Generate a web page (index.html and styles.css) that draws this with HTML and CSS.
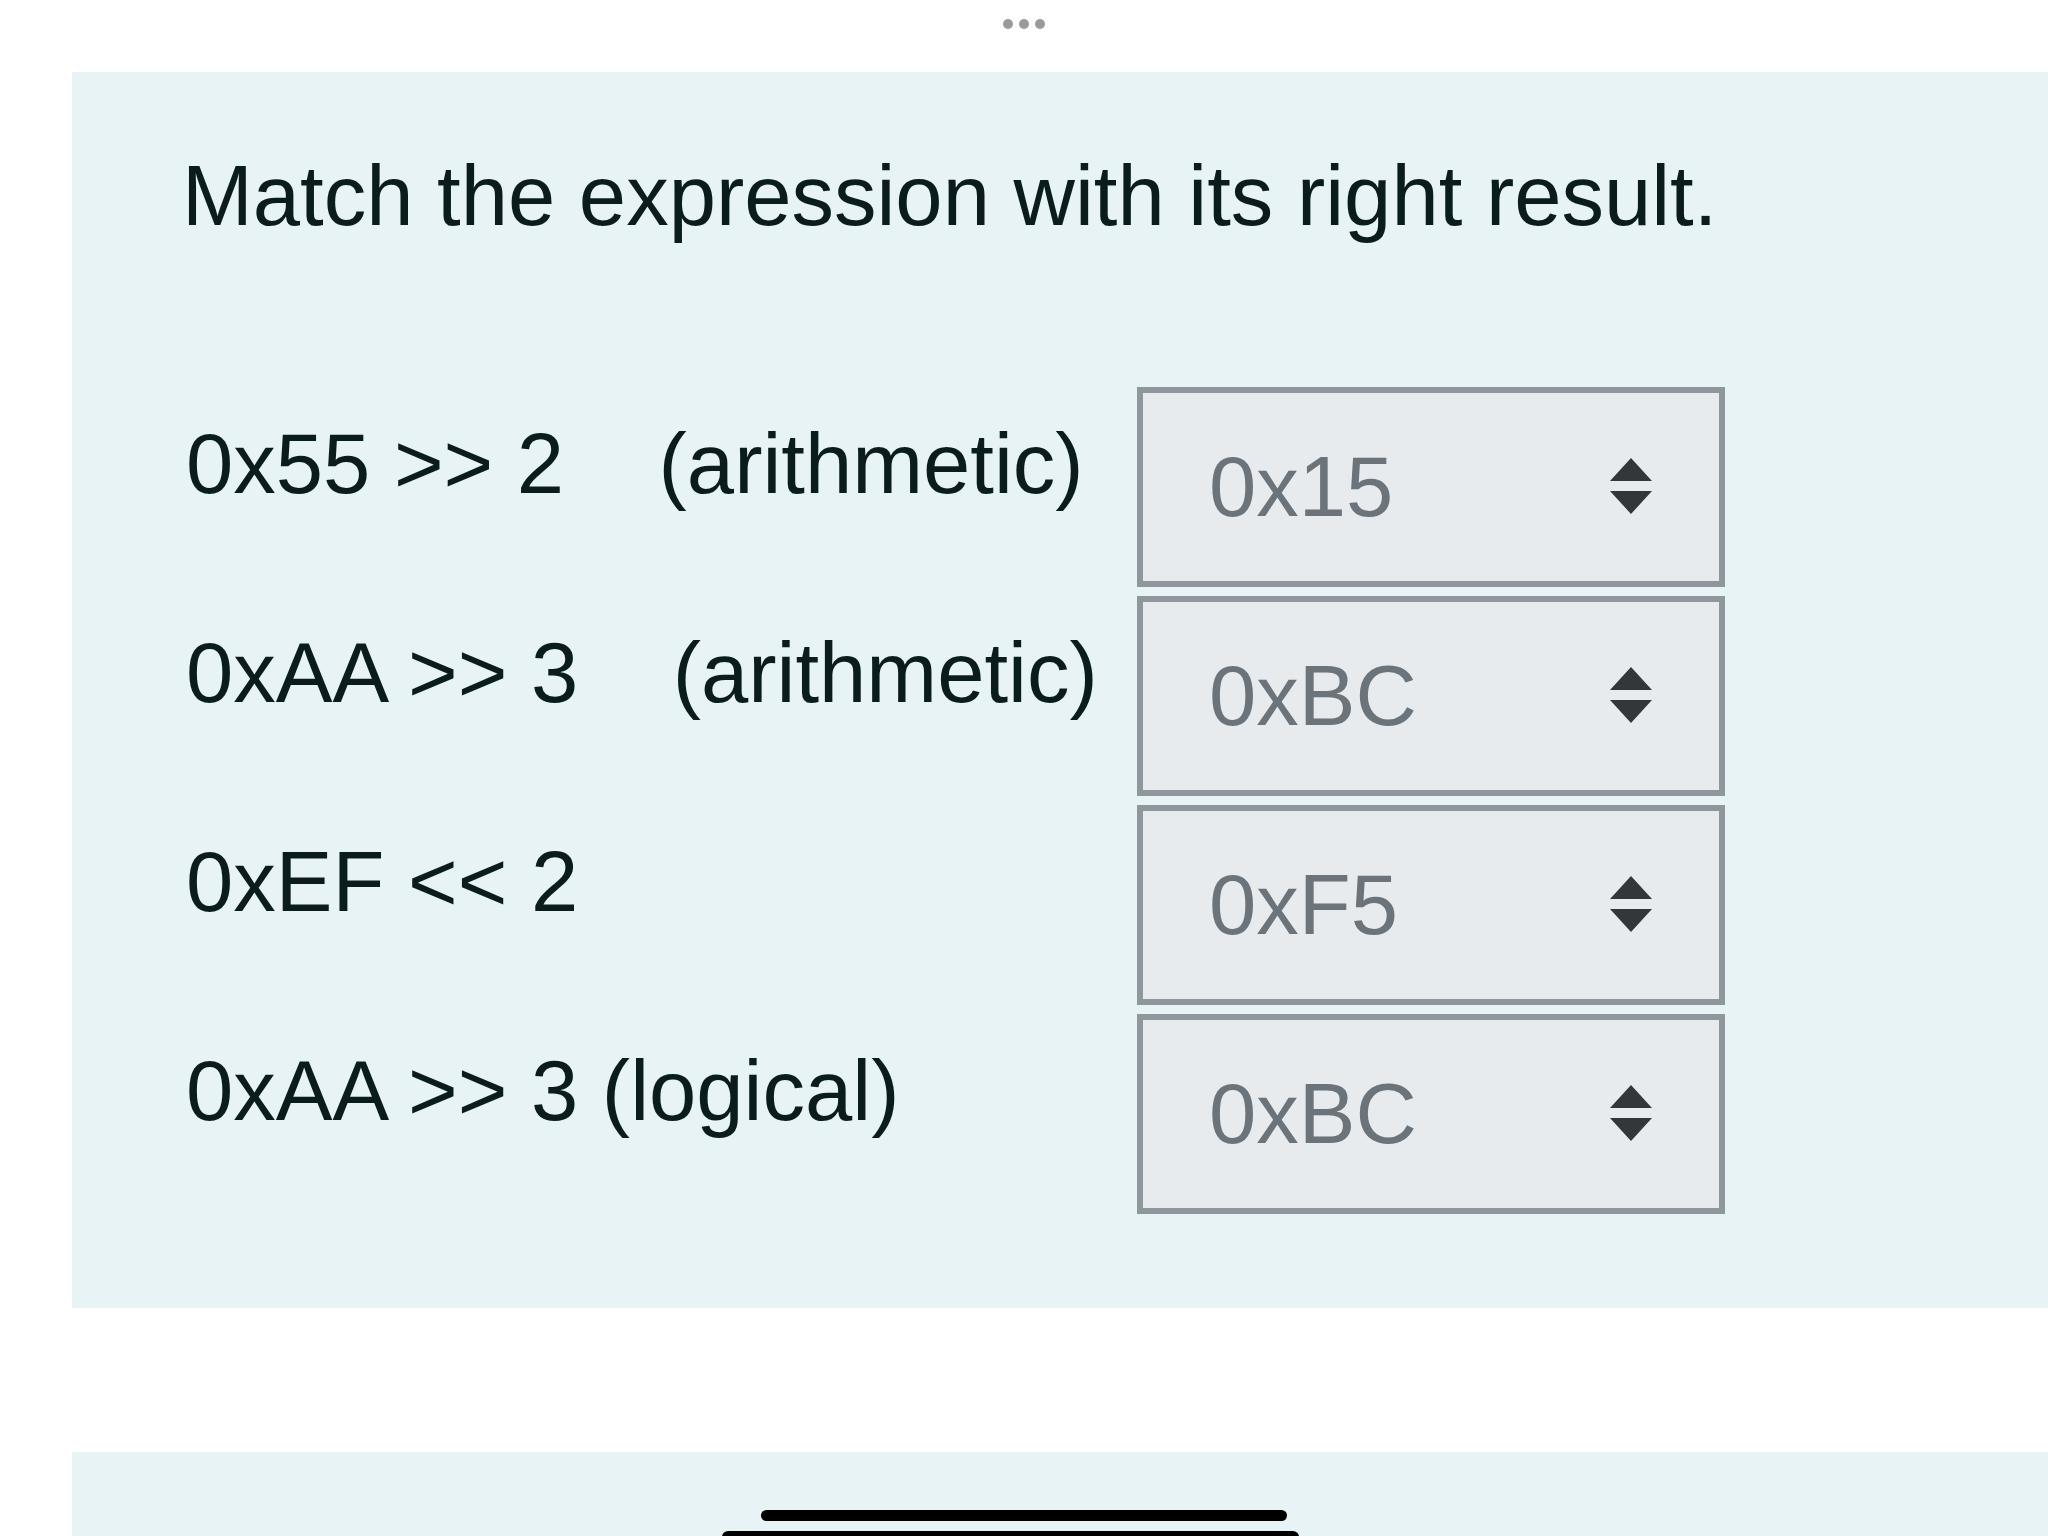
FILE: index.html
```html
<!DOCTYPE html>
<html lang="en">
<head>
  <meta charset="UTF-8">
  <title>Match the expression</title>
  <meta name="viewport" content="width=device-width, initial-scale=1.0">
  <link rel="stylesheet" href="styles.css">
</head>
<body>

  <div class="top-dots">
    <span></span><span></span><span></span>
  </div>

  <div class="question">
    <h1 class="qtext">Match the expression with its right result.</h1>

    <div class="matches">
      <div class="match-row">
        <div class="expr">0x55 &gt;&gt; 2&nbsp;&nbsp;&nbsp;&nbsp;(arithmetic)</div>
        <div class="select">
          <span class="value">0x15</span>
          <svg class="arrows" width="44" height="56" viewBox="0 0 44 56"><path d="M22 0 L43 23 L1 23 Z M1 33 L43 33 L22 56 Z" fill="#33373b"/></svg>
        </div>
      </div>
      <div class="match-row">
        <div class="expr">0xAA &gt;&gt; 3&nbsp;&nbsp;&nbsp;&nbsp;(arithmetic)</div>
        <div class="select">
          <span class="value">0xBC</span>
          <svg class="arrows" width="44" height="56" viewBox="0 0 44 56"><path d="M22 0 L43 23 L1 23 Z M1 33 L43 33 L22 56 Z" fill="#33373b"/></svg>
        </div>
      </div>
      <div class="match-row">
        <div class="expr">0xEF &lt;&lt; 2</div>
        <div class="select">
          <span class="value">0xF5</span>
          <svg class="arrows" width="44" height="56" viewBox="0 0 44 56"><path d="M22 0 L43 23 L1 23 Z M1 33 L43 33 L22 56 Z" fill="#33373b"/></svg>
        </div>
      </div>
      <div class="match-row">
        <div class="expr">0xAA &gt;&gt; 3 (logical)</div>
        <div class="select">
          <span class="value">0xBC</span>
          <svg class="arrows" width="44" height="56" viewBox="0 0 44 56"><path d="M22 0 L43 23 L1 23 Z M1 33 L43 33 L22 56 Z" fill="#33373b"/></svg>
        </div>
      </div>
    </div>
  </div>

  <div class="question next"></div>

  <div class="home-bar"></div>
  <div class="toolbar-edge"></div>

</body>
</html>
```

FILE: styles.css
```css
html, body {
  margin: 0;
  height: 1536px;
  overflow: hidden;
}
body {
  background-color: #fff;
  font-family: "Liberation Sans", Arial, sans-serif;
  color: #0b1c1f;
  position: relative;
}
.top-dots {
  height: 72px;
  display: flex;
  justify-content: center;
  align-items: flex-start;
  gap: 6px;
  box-sizing: border-box;
  padding-top: 19px;
}
.top-dots span {
  width: 10px;
  height: 10px;
  border-radius: 50%;
  background-color: #9a9a9a;
}
.question {
  margin-left: 72px;
  background-color: #e7f3f5;
  padding: 73px 0 94px 110px;
}
.question.next {
  margin-top: 144px;
  height: 120px;
  padding: 0;
}
.qtext {
  margin: 0 0 140px 0;
  font-size: 85px;
  font-weight: normal;
  line-height: 102px;
}
.matches {
  display: flex;
  flex-direction: column;
  gap: 9px;
}
.match-row {
  display: flex;
  align-items: flex-start;
}
.expr {
  width: 951px;
  padding: 26px 0 0 4px;
  font-size: 85px;
  line-height: 102px;
  white-space: nowrap;
}
.select {
  width: 444px;
  height: 188px;
  border: 6px solid #8f969e;
  background-color: #e7ebee;
  display: flex;
  align-items: center;
  justify-content: space-between;
  padding: 0 66px 0 66px;
}
.select .value {
  font-size: 85px;
  line-height: 102px;
  color: #6b737b;
}
.arrows {
  display: block;
  margin-top: -2px;
}
.home-bar {
  position: absolute;
  left: 761px;
  top: 1510px;
  width: 526px;
  height: 11px;
  border-radius: 6px;
  background-color: #000;
}
.toolbar-edge {
  position: absolute;
  left: 722px;
  top: 1531px;
  width: 577px;
  height: 20px;
  border-radius: 6px 6px 0 0;
  background-color: #000;
}
```
